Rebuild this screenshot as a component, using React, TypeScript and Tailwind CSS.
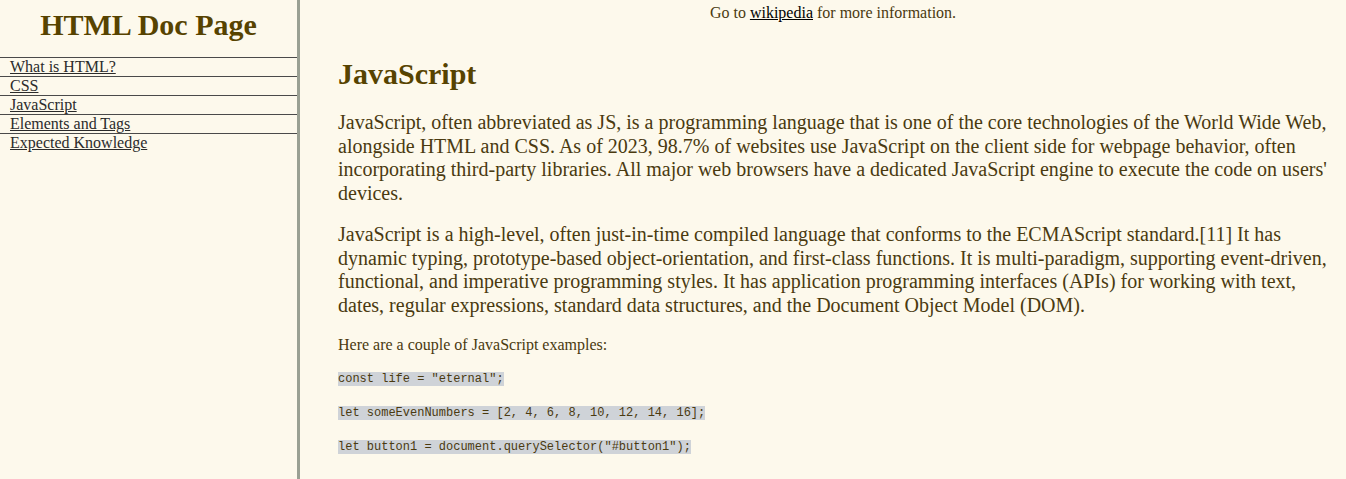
import React from "react";

const navItems = ["What is HTML?", "CSS", "JavaScript", "Elements and Tags", "Expected Knowledge"];

export default function App() {
  return (
    <div className="flex min-h-[479px] bg-[#fdf9ec] text-[#4a3a10]" style={{ fontFamily: '"Liberation Serif", serif' }}>
      <nav className="w-[300px] shrink-0 border-r-[3px] border-[#9aa093] min-h-[479px]">
        <header className="h-[57px] flex items-start justify-center pt-[6px]">
          <h1 className="text-[30px] font-bold text-[#574300] leading-[37px]">HTML Doc Page</h1>
        </header>
        <ul>
          {navItems.map((n) => (
            <li key={n} className="border-t border-[#4a4a4a]">
              <a href="#" className="block pl-[10px] text-[16px] leading-[18px] text-[#2b2b2b] underline">
                {n}
              </a>
            </li>
          ))}
        </ul>
      </nav>
      <main className="flex-1 pl-[38px] pr-[16px]">
        <p className="text-center text-[16px] leading-[18px] pt-[4px] pr-[2px]">
          Go to <a href="#" className="underline text-black">wikipedia</a> for more information.
        </p>
        <h2 className="mt-[35px] text-[30px] font-bold text-[#574300] leading-[34px]">JavaScript</h2>
        <p className="mt-[20px] text-[20px] leading-[23.5px]">
          JavaScript, often abbreviated as JS, is a programming language that is one of the core technologies of the World Wide Web, alongside HTML and CSS. As of 2023, 98.7% of websites use JavaScript on the client side for webpage behavior, often incorporating third-party libraries. All major web browsers have a dedicated JavaScript engine to execute the code on users' devices.
        </p>
        <p className="mt-[18px] text-[20px] leading-[23.5px]">
          JavaScript is a high-level, often just-in-time compiled language that conforms to the ECMAScript standard.[11] It has dynamic typing, prototype-based object-orientation, and first-class functions. It is multi-paradigm, supporting event-driven, functional, and imperative programming styles. It has application programming interfaces (APIs) for working with text, dates, regular expressions, standard data structures, and the Document Object Model (DOM).
        </p>
        <p className="mt-[19px] text-[16px] leading-[18px]">Here are a couple of JavaScript examples:</p>
        <div className="mt-[18px] flex flex-col gap-[20px] items-start" style={{ fontFamily: '"Liberation Mono", monospace' }}>
          <code className="bg-[#cfd3d8] text-[12px] leading-[14px] text-[#4a3a10]">const life = "eternal";</code>
          <code className="bg-[#cfd3d8] text-[12px] leading-[14px] text-[#4a3a10]">let someEvenNumbers = [2, 4, 6, 8, 10, 12, 14, 16];</code>
          <code className="bg-[#cfd3d8] text-[12px] leading-[14px] text-[#4a3a10]">let button1 = document.querySelector("#button1");</code>
        </div>
      </main>
    </div>
  );
}
